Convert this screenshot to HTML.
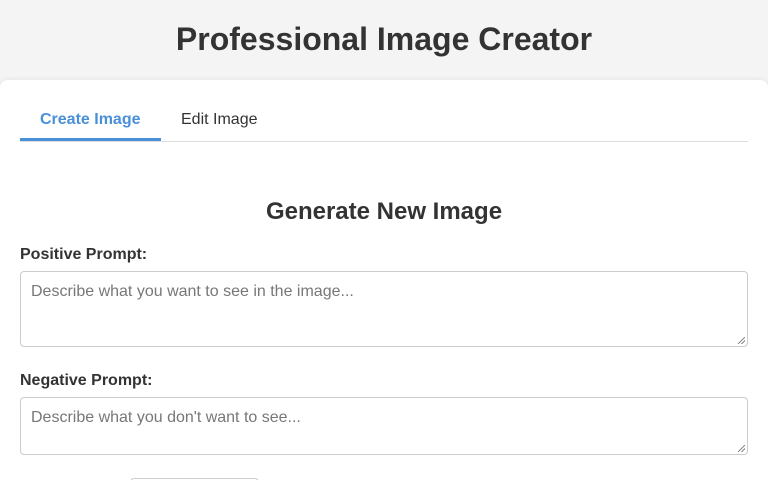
<!DOCTYPE html>
<html><head><style>
*{box-sizing:border-box;margin:0;padding:0}
html,body{width:768px;height:480px;overflow:hidden}
body{background:#f4f4f4;font-family:"Liberation Sans",sans-serif;color:#333;position:relative}
h1{position:absolute;top:21px;left:0;width:768px;text-align:center;font-size:32px;font-weight:bold;color:#333}
.card{position:absolute;top:80px;left:0;width:768px;height:400px;background:#fff;border-radius:8px 8px 0 0;box-shadow:0 0 6px rgba(0,0,0,0.08)}
.tabline{position:absolute;top:141px;left:20px;width:728px;height:1px;background:#ddd}
.tab{position:absolute;top:111px;font-size:16px}
.ul{position:absolute;top:138px;left:20px;width:141px;height:3px;background:#4a90d9}
h2{position:absolute;top:198px;left:0;width:768px;text-align:center;font-size:24px;font-weight:bold}
.lab{position:absolute;left:20px;font-size:16px;font-weight:bold}
.ta{position:absolute;left:20px;width:728px;border:1px solid #ccc;border-radius:4px;background:#fff;padding:11px 10px 10px;font-size:16px;color:#777}
.grip{position:absolute;right:2px;bottom:2px;width:7px;height:7px;background:linear-gradient(135deg,transparent 45%,#888 46%,#888 54%,transparent 55%,transparent 70%,#888 71%,#888 79%,transparent 80%)}
.btn{position:absolute;top:478px;left:130px;width:129px;height:10px;border:1px solid #ccc;border-radius:4px}
</style></head><body>
<h1>Professional Image Creator</h1>
<div class="card"></div>
<div class="tabline"></div>
<div class="ul"></div>
<div class="tab" style="left:40px;color:#4a90d9;font-weight:bold">Create Image</div>
<div class="tab" style="left:181px;color:#333">Edit Image</div>
<h2>Generate New Image</h2>
<div class="lab" style="top:246px">Positive Prompt:</div>
<div class="ta" style="top:271px;height:76px">Describe what you want to see in the image...<div class="grip"></div></div>
<div class="lab" style="top:372px">Negative Prompt:</div>
<div class="ta" style="top:397px;height:58px">Describe what you don't want to see...<div class="grip"></div></div>
<div class="btn"></div>
</body></html>
